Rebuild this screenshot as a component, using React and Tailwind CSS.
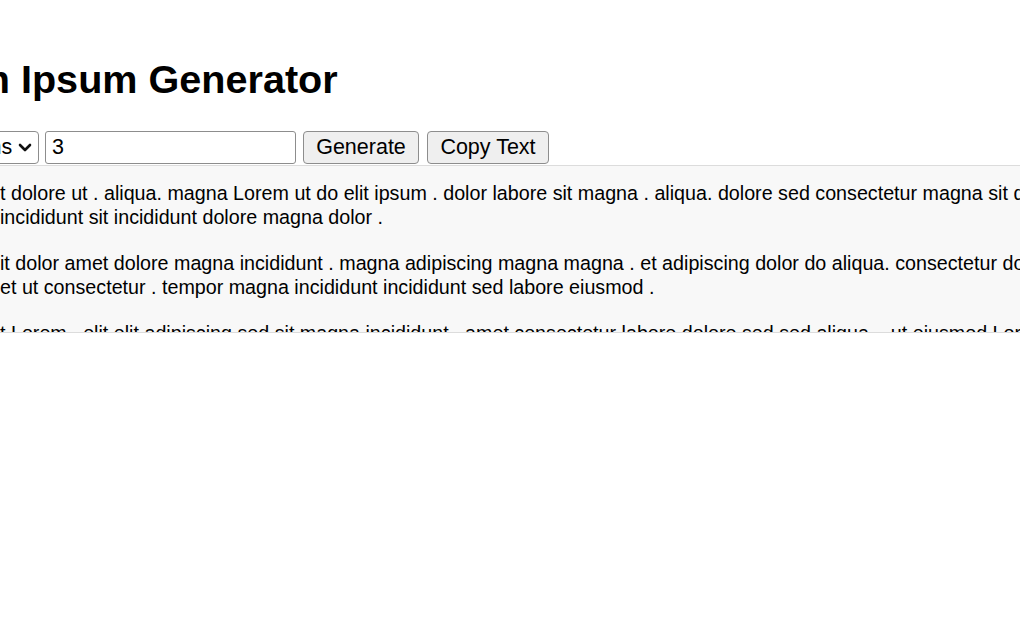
import React from "react";

const paragraphs = [
  [
    "t dolore ut . aliqua. magna Lorem ut do elit ipsum . dolor labore sit magna . aliqua. dolore sed consectetur magna sit dolor amet",
    "incididunt sit incididunt dolore magna dolor .",
  ],
  [
    "it dolor amet dolore magna incididunt . magna adipiscing magna magna . et adipiscing dolor do aliqua. consectetur dolore sed",
    "et ut consectetur . tempor magna incididunt incididunt sed labore eiusmod .",
  ],
  [
    "t Lorem . elit elit adipiscing sed sit magna incididunt . amet consectetur labore dolore sed sed aliqua. . ut eiusmod Lorem ipsum",
    "dolore magna aliqua. .",
  ],
];

export default function App() {
  return (
    <div className="min-h-screen w-full overflow-hidden bg-white text-black font-['Liberation_Sans',Arial,sans-serif]">
      <div className="-ml-[111px] pt-[56px]">
        <h1 className="text-[39.6px] font-bold leading-[46px]">Lorem Ipsum Generator</h1>

        <div className="mt-[29px] flex items-center pl-[7px]">
          <div className="relative h-[33px] w-[143px]">
            <select
              defaultValue="paragraphs"
              className="h-full w-full appearance-none rounded-[4px] border border-[#8d8d8d] bg-white pl-[4px] pr-[26px] text-[21.5px] leading-[31px] text-black outline-none"
            >
              <option value="paragraphs">Paragraphs</option>
              <option value="sentences">Sentences</option>
              <option value="words">Words</option>
            </select>
            <svg
              className="pointer-events-none absolute right-[7px] top-[12px] h-[9px] w-[14px]"
              viewBox="0 0 14 9"
              fill="none"
              stroke="#111"
              strokeWidth="2.6"
              strokeLinecap="round"
              strokeLinejoin="round"
            >
              <polyline points="2,2 7,7 12,2" />
            </svg>
          </div>
          <input
            type="text"
            defaultValue="3"
            className="ml-[6px] h-[33px] w-[251px] rounded-[3px] border border-[#8d8d8d] bg-white pl-[6px] text-[21.5px] text-black outline-none"
          />
          <button className="ml-[7px] flex h-[33px] w-[116px] items-center justify-center rounded-[4px] border border-[#8d8d8d] bg-[#efefef] text-[21.5px] text-black">
            Generate
          </button>
          <button className="ml-[8px] flex h-[33px] w-[122px] items-center justify-center rounded-[4px] border border-[#8d8d8d] bg-[#efefef] text-[21.5px] text-black">
            Copy Text
          </button>
        </div>

        <div className="mt-[1px] h-[168px] overflow-hidden border-y border-[#dcdcdc] bg-[#f8f8f8] pl-[111px] pt-[16px] text-[19.7px] leading-[23.5px] whitespace-nowrap">
          {paragraphs.map((lines, i) => (
            <p key={i} className="mb-[23px]">
              {lines.map((l, j) => (
                <span key={j} className="block">
                  {l}
                </span>
              ))}
            </p>
          ))}
        </div>
      </div>
    </div>
  );
}
